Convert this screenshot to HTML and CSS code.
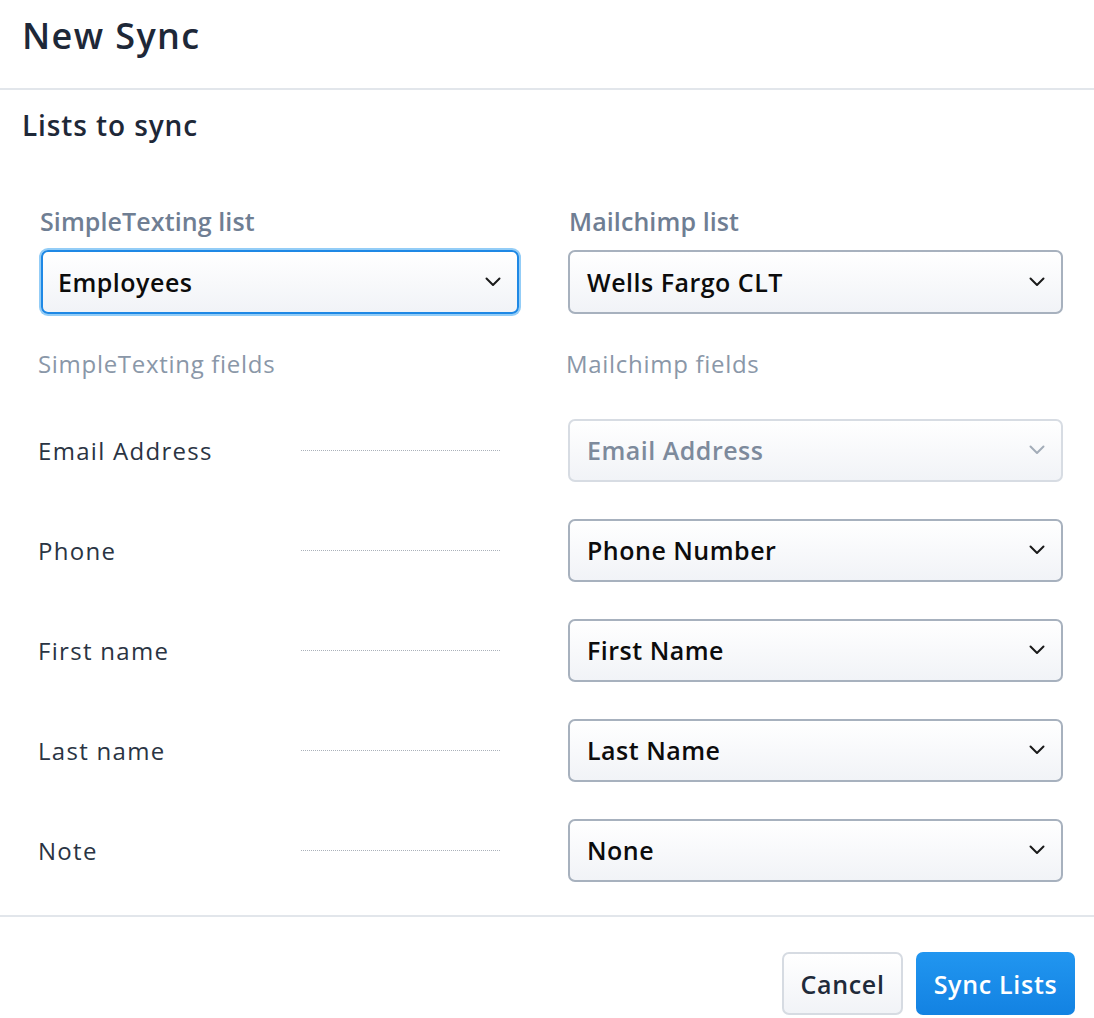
FILE: index.html
```html
<!DOCTYPE html>
<html>
<head>
<meta charset="utf-8">
<link rel="stylesheet" href="styles.css">
</head>
<body>
<div class="modal">
  <header class="modal-header">
    <h1 class="title">New Sync</h1>
  </header>
  <section class="modal-body">
    <h2 class="section-title">Lists to sync</h2>
    <div class="grid">
      <div class="col col-left">
        <div class="list-label">SimpleTexting list</div>
        <div class="select focused"><span>Employees</span><svg class="chev" viewBox="0 0 16 10"><path d="M1.5 1.5 L8 8 L14.5 1.5"/></svg></div>
        <div class="fields-label">SimpleTexting fields</div>
        <div class="row"><span class="field">Email Address</span><span class="dots"></span></div>
        <div class="row"><span class="field">Phone</span><span class="dots"></span></div>
        <div class="row"><span class="field">First name</span><span class="dots"></span></div>
        <div class="row"><span class="field">Last name</span><span class="dots"></span></div>
        <div class="row"><span class="field">Note</span><span class="dots"></span></div>
      </div>
      <div class="col col-right">
        <div class="list-label">Mailchimp list</div>
        <div class="select"><span>Wells Fargo CLT</span><svg class="chev" viewBox="0 0 16 10"><path d="M1.5 1.5 L8 8 L14.5 1.5"/></svg></div>
        <div class="fields-label">Mailchimp fields</div>
        <div class="row"><div class="select disabled"><span>Email Address</span><svg class="chev" viewBox="0 0 16 10"><path d="M1.5 1.5 L8 8 L14.5 1.5"/></svg></div></div>
        <div class="row"><div class="select"><span>Phone Number</span><svg class="chev" viewBox="0 0 16 10"><path d="M1.5 1.5 L8 8 L14.5 1.5"/></svg></div></div>
        <div class="row"><div class="select"><span>First Name</span><svg class="chev" viewBox="0 0 16 10"><path d="M1.5 1.5 L8 8 L14.5 1.5"/></svg></div></div>
        <div class="row"><div class="select"><span>Last Name</span><svg class="chev" viewBox="0 0 16 10"><path d="M1.5 1.5 L8 8 L14.5 1.5"/></svg></div></div>
        <div class="row"><div class="select"><span>None</span><svg class="chev" viewBox="0 0 16 10"><path d="M1.5 1.5 L8 8 L14.5 1.5"/></svg></div></div>
      </div>
    </div>
  </section>
  <footer class="modal-footer">
    <button class="btn btn-cancel">Cancel</button>
    <button class="btn btn-primary">Sync Lists</button>
  </footer>
</div>
</body>
</html>
```
FILE: styles.css
```css
* { box-sizing: border-box; }
html, body { margin: 0; padding: 0; background: #fff; }
body {
  font-family: "Open Sans", "Liberation Sans", sans-serif;
  color: #1f2a3a;
  width: 1094px;
  height: 1018px;
  overflow: hidden;
}
.modal-header {
  height: 90px;
  padding: 14px 22px 0;
  border-bottom: 2px solid #e2e6eb;
}
.title {
  margin: 0;
  font-size: 36px;
  line-height: 44px;
  font-weight: 600;
  letter-spacing: 1.4px;
  color: #1e2838;
}
.modal-body {
  padding: 19px 31px 0 22px;
}
.section-title {
  margin: 0;
  font-size: 28px;
  line-height: 32px;
  font-weight: 600;
  letter-spacing: 0.9px;
  color: #1e2838;
}
.grid {
  display: grid;
  grid-template-columns: 482px 495px;
  column-gap: 47px;
  padding-left: 17px;
  margin-top: 66px;
}
.col { display: flex; flex-direction: column; }
.list-label {
  font-size: 25px;
  line-height: 28px;
  font-weight: 600;
  letter-spacing: 0.1px;
  color: #6f7e93;
  margin-left: 1px;
  margin-bottom: 15px;
}
.select {
  height: 64px;
  border: 2px solid #a7b1be;
  border-radius: 7px;
  background: linear-gradient(#ffffff, #f1f3f7);
  display: flex;
  align-items: center;
  justify-content: space-between;
  padding: 0 16px 0 17px;
  font-size: 25px;
  font-weight: 600;
  letter-spacing: 0.5px;
  color: #0c0c0c;
}
.col-left .select { margin: 0 2px; padding-left: 15px; }
.select.focused {
  border-color: #1e88e5;
  box-shadow: 0 0 0 2px #93cdf7;
}
.select.disabled {
  border-color: #d7dce3;
  color: #7d8a9c;
}
.chev {
  width: 16px;
  height: 10px;
  fill: none;
  stroke: #1a1a1a;
  stroke-width: 2;
  stroke-linecap: round;
  stroke-linejoin: round;
}
.select.disabled .chev { stroke: #a3acb8; }
.fields-label {
  font-size: 24px;
  line-height: 28px;
  font-weight: 400;
  letter-spacing: 0.7px;
  color: #8a97a8;
  margin-top: 36px;
  margin-bottom: 22px;
}
.col-left .fields-label { margin-left: -1px; }
.col-right .fields-label { margin-left: -2px; }
.row {
  height: 100px;
  display: flex;
  align-items: center;
}
.row .select { flex: 1; height: 63px; margin: 0; }
.field {
  width: 263px;
  font-size: 24px;
  letter-spacing: 1.3px;
  color: #2a3443;
  margin-left: -1px;
}
.dots {
  width: 199px;
  border-top: 1px dotted #aab1ba;
}
.modal-footer {
  margin-top: 15px;
  border-top: 2px solid #e2e6eb;
  padding: 35px 19px 0 0;
  display: flex;
  justify-content: flex-end;
  gap: 13px;
}
.btn {
  height: 63px;
  border-radius: 7px;
  font-family: inherit;
  font-size: 25px;
  font-weight: 600;
  letter-spacing: 0.7px;
  cursor: pointer;
  padding: 0;
}
.btn-cancel {
  width: 121px;
  border: 2px solid #d6dbe2;
  background: linear-gradient(#ffffff, #f1f3f7);
  color: #1f2a3a;
}
.btn-primary {
  width: 159px;
  border: 0;
  background: linear-gradient(#2196f0, #1382e2);
  color: #fff;
}
```
